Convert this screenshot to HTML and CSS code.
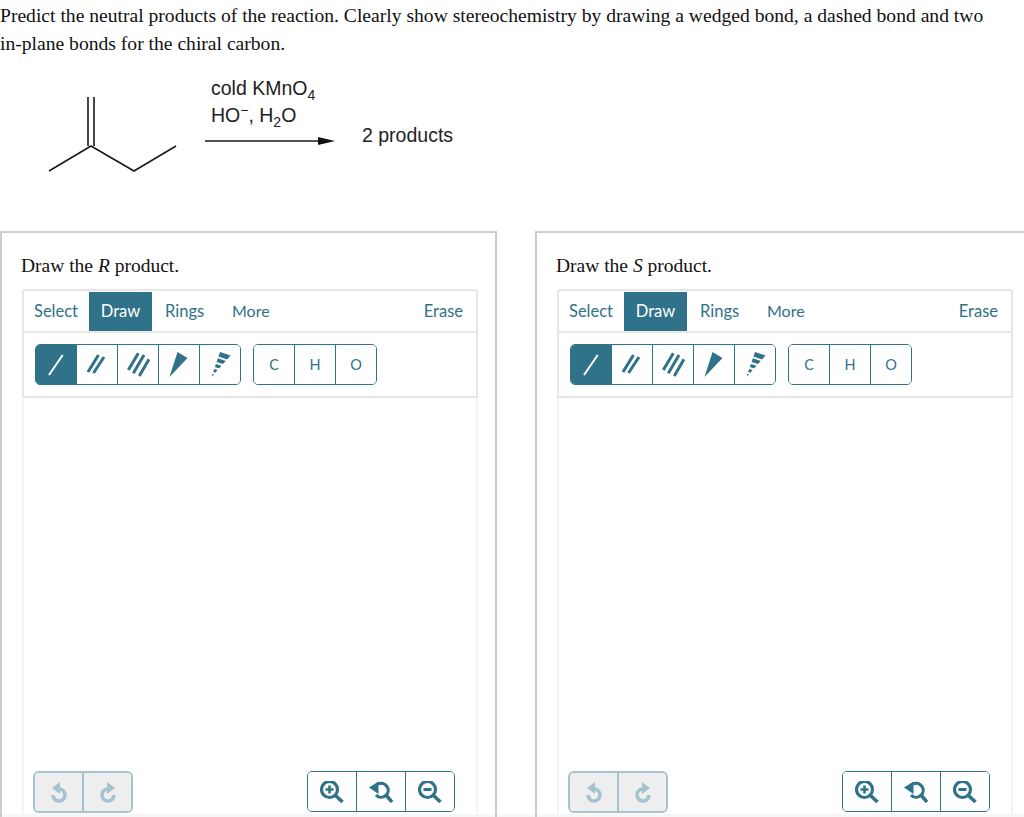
FILE: index.html
```html
<html>
  <head>
    <title>Draw the products</title>
    <meta charset="utf-8" />
    <link rel="stylesheet" href="styles.css">
  </head>
  <body>
    <p class="question">Predict the neutral products of the reaction. Clearly show stereochemistry by drawing a wedged bond, a dashed bond and two in-plane bonds for the chiral carbon.</p>

    <div class="reaction">
      <svg class="molecule" width="130" height="80" viewBox="0 0 130 80">
        <path d="M1 75 L43 50 L86 75 L128 50" fill="none" stroke="#1a1a1a" stroke-width="1.6"/>
        <path d="M40 50 V1 M46 50 V1" fill="none" stroke="#1a1a1a" stroke-width="1.6"/>
      </svg>
      <div class="conditions">
        <div class="reagents">
          <div>cold KMnO<sub>4</sub></div>
          <div>HO<sup>&minus;</sup>, H<sub>2</sub>O</div>
        </div>
        <svg width="130" height="10" viewBox="0 0 130 10">
          <path d="M0 5 H118" stroke="#1a1a1a" stroke-width="1.4"/>
          <path d="M113 1 L130 5 L113 9 Z" fill="#111"/>
        </svg>
      </div>
      <div class="result">2 products</div>
    </div>

    <div class="panels">
      <div class="panel">
        <p class="prompt">Draw the <i>R</i> product.</p>
        <div class="sketcher">
          <div class="tabs">
            <span class="tab select">Select</span>
            <span class="tab active">Draw</span>
            <span class="tab rings">Rings</span>
            <span class="tab more">More</span>
            <span class="tab erase">Erase</span>
          </div>
          <div class="tools">
            <div class="group bonds">
              <button class="btn selected"><svg width="20" height="28" viewBox="0 0 20 28"><path d="M3 24 L16.7 4" stroke="#fff" stroke-width="2"/></svg></button>
              <button class="btn"><svg width="20" height="28" viewBox="0 0 20 28"><path d="M1 21 L11.5 4 M6.5 22 L17 6" stroke="#2f7289" stroke-width="3"/></svg></button>
              <button class="btn"><svg width="24" height="28" viewBox="0 0 24 28"><path d="M2.3 19 L12.3 2.3 M7.3 22.3 L18 4 M13.3 25 L23 8.3" stroke="#2f7289" stroke-width="3"/></svg></button>
              <button class="btn"><svg width="22" height="28" viewBox="0 0 22 28"><path d="M1.5 26 L9.5 1 L19.5 7 Z" fill="#2f7289"/></svg></button>
              <button class="btn"><svg width="24" height="28" viewBox="0 0 24 28"><path d="M12 1 L22.5 4.5 L19.1 8.4 L10.5 5.5 Z M9.9 7.3 L17.8 9.9 L14.9 13.1 L8.6 11 Z M7.9 13 L13.4 14.8 L11.1 17.4 L6.9 16 Z M6.2 18 L9.6 19.1 L7.3 21.7 L5.2 21 Z M4.6 22.8 L6 23.2 L4.1 25.4 L3.8 25.3 Z" fill="#2f7289"/></svg></button>
            </div>
            <div class="group atoms">
              <button class="btn">C</button>
              <button class="btn">H</button>
              <button class="btn">O</button>
            </div>
          </div>
          <div class="canvas">
            <div class="group history">
              <button class="btn"><svg width="18" height="21" viewBox="0 0 18 21"><path d="M8 7 H9 A6 6 0 1 1 3 13" fill="none" stroke="#a5c3ce" stroke-width="3.6"/><path d="M10 0 V12 L2 6 Z" fill="#a5c3ce"/></svg></button>
              <button class="btn"><svg width="18" height="21" viewBox="0 0 18 21"><path d="M10 7 H9 A6 6 0 1 0 15 13" fill="none" stroke="#a5c3ce" stroke-width="3.6"/><path d="M8 0 V12 L16 6 Z" fill="#a5c3ce"/></svg></button>
            </div>
            <div class="group zooms">
              <button class="btn"><svg width="24" height="22" viewBox="0 0 24 22"><circle cx="9.5" cy="8.5" r="8" fill="none" stroke="#2f7289" stroke-width="3.2"/><path d="M15.5 14.5 L22.5 21" stroke="#2f7289" stroke-width="3.6"/><path d="M9.5 4.5 V12.5 M5.5 8.5 H13.5" stroke="#2f7289" stroke-width="2.6"/></svg></button>
              <button class="btn"><svg width="24" height="22" viewBox="0 0 24 22"><path d="M9 3 A7 7 0 1 1 7 14" fill="none" stroke="#2f7289" stroke-width="3.2"/><path d="M17 14 L23 21" stroke="#2f7289" stroke-width="3.6"/><path d="M0 6.5 L9.5 0.5 L9.5 13 Z" fill="#2f7289"/></svg></button>
              <button class="btn"><svg width="24" height="22" viewBox="0 0 24 22"><circle cx="9.5" cy="8.5" r="8" fill="none" stroke="#2f7289" stroke-width="3.2"/><path d="M15.5 14.5 L22.5 21" stroke="#2f7289" stroke-width="3.6"/><path d="M5.5 8.5 H13.5" stroke="#2f7289" stroke-width="2.8"/></svg></button>
            </div>
          </div>
        </div>
      </div>

      <div class="panel second">
        <p class="prompt">Draw the <i>S</i> product.</p>
        <div class="sketcher">
          <div class="tabs">
            <span class="tab select">Select</span>
            <span class="tab active">Draw</span>
            <span class="tab rings">Rings</span>
            <span class="tab more">More</span>
            <span class="tab erase">Erase</span>
          </div>
          <div class="tools">
            <div class="group bonds">
              <button class="btn selected"><svg width="20" height="28" viewBox="0 0 20 28"><path d="M3 24 L16.7 4" stroke="#fff" stroke-width="2"/></svg></button>
              <button class="btn"><svg width="20" height="28" viewBox="0 0 20 28"><path d="M1 21 L11.5 4 M6.5 22 L17 6" stroke="#2f7289" stroke-width="3"/></svg></button>
              <button class="btn"><svg width="24" height="28" viewBox="0 0 24 28"><path d="M2.3 19 L12.3 2.3 M7.3 22.3 L18 4 M13.3 25 L23 8.3" stroke="#2f7289" stroke-width="3"/></svg></button>
              <button class="btn"><svg width="22" height="28" viewBox="0 0 22 28"><path d="M1.5 26 L9.5 1 L19.5 7 Z" fill="#2f7289"/></svg></button>
              <button class="btn"><svg width="24" height="28" viewBox="0 0 24 28"><path d="M12 1 L22.5 4.5 L19.1 8.4 L10.5 5.5 Z M9.9 7.3 L17.8 9.9 L14.9 13.1 L8.6 11 Z M7.9 13 L13.4 14.8 L11.1 17.4 L6.9 16 Z M6.2 18 L9.6 19.1 L7.3 21.7 L5.2 21 Z M4.6 22.8 L6 23.2 L4.1 25.4 L3.8 25.3 Z" fill="#2f7289"/></svg></button>
            </div>
            <div class="group atoms">
              <button class="btn">C</button>
              <button class="btn">H</button>
              <button class="btn">O</button>
            </div>
          </div>
          <div class="canvas">
            <div class="group history">
              <button class="btn"><svg width="18" height="21" viewBox="0 0 18 21"><path d="M8 7 H9 A6 6 0 1 1 3 13" fill="none" stroke="#a5c3ce" stroke-width="3.6"/><path d="M10 0 V12 L2 6 Z" fill="#a5c3ce"/></svg></button>
              <button class="btn"><svg width="18" height="21" viewBox="0 0 18 21"><path d="M10 7 H9 A6 6 0 1 0 15 13" fill="none" stroke="#a5c3ce" stroke-width="3.6"/><path d="M8 0 V12 L16 6 Z" fill="#a5c3ce"/></svg></button>
            </div>
            <div class="group zooms">
              <button class="btn"><svg width="24" height="22" viewBox="0 0 24 22"><circle cx="9.5" cy="8.5" r="8" fill="none" stroke="#2f7289" stroke-width="3.2"/><path d="M15.5 14.5 L22.5 21" stroke="#2f7289" stroke-width="3.6"/><path d="M9.5 4.5 V12.5 M5.5 8.5 H13.5" stroke="#2f7289" stroke-width="2.6"/></svg></button>
              <button class="btn"><svg width="24" height="22" viewBox="0 0 24 22"><path d="M9 3 A7 7 0 1 1 7 14" fill="none" stroke="#2f7289" stroke-width="3.2"/><path d="M17 14 L23 21" stroke="#2f7289" stroke-width="3.6"/><path d="M0 6.5 L9.5 0.5 L9.5 13 Z" fill="#2f7289"/></svg></button>
              <button class="btn"><svg width="24" height="22" viewBox="0 0 24 22"><circle cx="9.5" cy="8.5" r="8" fill="none" stroke="#2f7289" stroke-width="3.2"/><path d="M15.5 14.5 L22.5 21" stroke="#2f7289" stroke-width="3.6"/><path d="M5.5 8.5 H13.5" stroke="#2f7289" stroke-width="2.8"/></svg></button>
            </div>
          </div>
        </div>
      </div>
    </div>
  </body>
</html>
```

FILE: styles.css
```css
* {
  padding: 0;
  margin: 0;
  box-sizing: border-box;
}
html,body {
  height: 817px;
  overflow: hidden;
}
body {
  font-family: "Liberation Serif",serif;
  color: #111;
  background: linear-gradient(white 814px,#f6f6f6 814px);
}
.question {
  font-size: 19.6px;
  line-height: 28px;
  height: 56px;
  margin-top: 2px;
  width: 1000px;
}
.reaction {
  display: flex;
  height: 120px;
  margin-top: 18px;
  font-family: "Liberation Sans",sans-serif;
  font-size: 19.5px;
  color: #222;
}
.molecule {
  margin-left: 48px;
  margin-top: 20px;
}
.conditions {
  margin-left: 27px;
}
.reagents {
  margin-left: 6px;
  line-height: 27px;
  height: 60px;
  margin-top: -1px;
  margin-bottom: 1px;
}
.reagents sub,.reagents sup {
  font-size: 14px;
  line-height: 0;
}
.conditions svg {
  display: block;
}
.result {
  margin-left: 27px;
  margin-top: 48px;
}
.panels {
  display: flex;
  gap: 38px;
  margin-top: 35px;
}
.panel {
  width: 497px;
  height: 600px;
  flex: none;
  border: 2px solid #ccc;
  border-bottom: none;
  padding: 22px 0 0 20px;
}
.second {
  width: 489px;
  border-right: none;
}
.prompt {
  font-size: 19.5px;
  line-height: 22px;
  margin-bottom: 12px;
  margin-left: -1px;
}
.sketcher {
  width: 456px;
  border-top: 2px solid #e6e6e6;
  border-radius: 3px 3px 0 0;
  font-family: Lato,sans-serif;
  color: #2f7289;
}
.tabs {
  display: flex;
  height: 42px;
  padding-top: 1px;
  border-left: 2px solid #e6e6e6;
  border-right: 2px solid #e6e6e6;
  border-bottom: 2px solid #e6e6e6;
  font-size: 16.5px;
}
.tab {
  height: 39px;
  line-height: 38px;
}
.select {
  width: 65px;
  padding-left: 10px;
}
.active {
  width: 63px;
  background-color: #2f7289;
  color: white;
  text-align: center;
}
.rings {
  width: 80px;
  padding-left: 13px;
}
.more {
  font-size: 16px;
}
.erase {
  margin-left: auto;
  padding-right: 13px;
}
.tools {
  display: flex;
  gap: 12px;
  height: 65px;
  padding-top: 11px;
  padding-left: 11px;
  border-left: 2px solid #e6e6e6;
  border-right: 2px solid #e6e6e6;
  border-bottom: 2px solid #e6e6e6;
}
.group {
  display: flex;
  height: 41px;
  border: 1px solid #2f7289;
  border-radius: 5px;
  overflow: hidden;
}
.bonds {
  width: 206px;
}
.atoms {
  width: 124px;
}
.btn {
  flex: 1;
  display: flex;
  align-items: center;
  justify-content: center;
  background-color: white;
  border: none;
  border-left: 1px solid #2f7289;
  font-family: Lato,sans-serif;
  font-size: 14.5px;
  color: #2f7289;
}
.btn:first-child {
  border-left: none;
}
.selected {
  background-color: #2f7289;
}
.canvas {
  display: flex;
  justify-content: space-between;
  align-items: flex-start;
  height: 416px;
  padding: 373px 21px 0 9px;
  border-left: 2px solid #f4f4f4;
  border-right: 2px solid #f4f4f4;
}
.history {
  width: 100px;
  height: 42px;
  border: 2px solid #a5c3ce;
  border-radius: 6px;
}
.history .btn {
  background-color: #eee;
  border-left: 2px solid #a5c3ce;
}
.history .btn:first-child {
  border-left: none;
}
.zooms {
  width: 148px;
}
```
